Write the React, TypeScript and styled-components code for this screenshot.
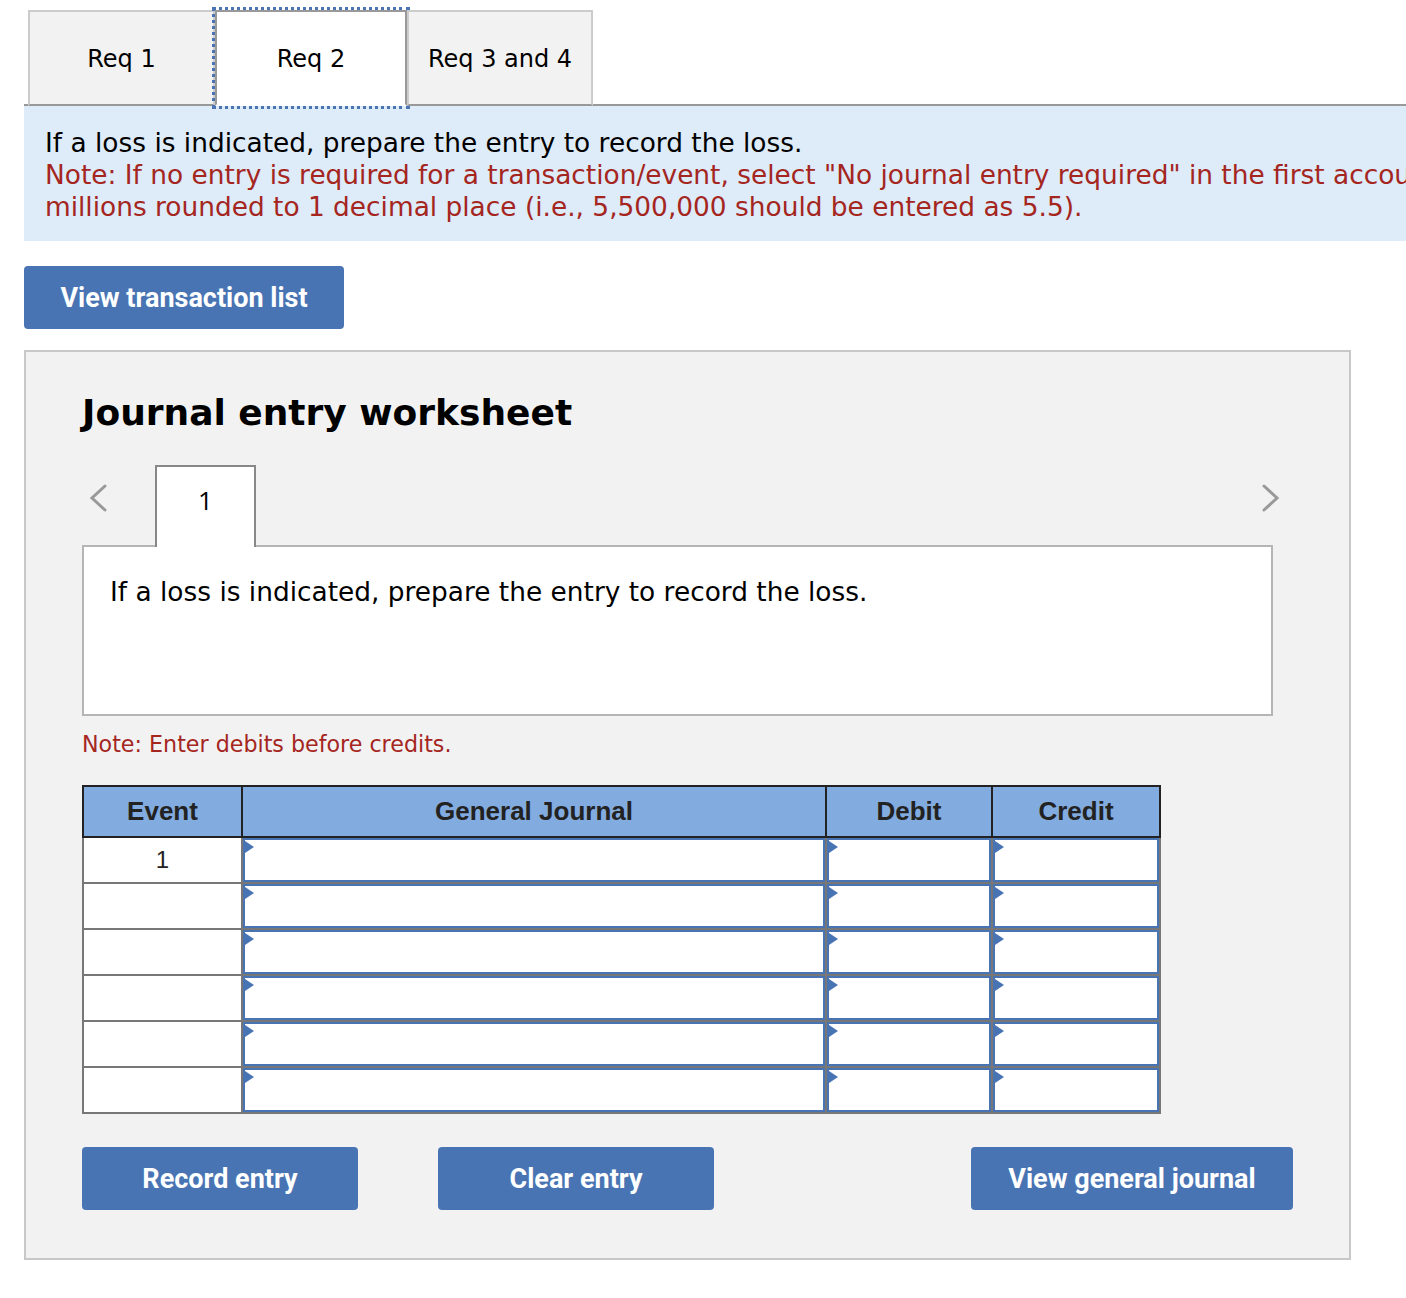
import React from 'react';
import styled, { createGlobalStyle } from 'styled-components';

const GlobalStyle = createGlobalStyle`
  html, body {
    margin: 0;
    padding: 0;
    background: #ffffff;
    overflow-x: hidden;
  }
  body {
    font-family: 'DejaVu Sans', Verdana, sans-serif;
    color: #000;
  }
`;

const Page = styled.div`
  padding: 10px 0 40px 24px;
  width: 1700px;
`;

const TabBar = styled.div`
  display: flex;
  padding-left: 4px;
  border-bottom: 2px solid #999;
`;

const ReqTab = styled.button<{ $active?: boolean; $width: number }>`
  width: ${(p) => p.$width}px;
  height: 96px;
  margin-bottom: -2px;
  font-family: 'DejaVu Sans', Verdana, sans-serif;
  font-size: 24px;
  color: #000;
  background: ${(p) => (p.$active ? '#ffffff' : '#f2f2f2')};
  border: 2px solid ${(p) => (p.$active ? '#999' : '#cccccc')};
  border-bottom: ${(p) => (p.$active ? '2px solid #fff' : '2px solid #999')};
  outline: ${(p) => (p.$active ? '3px dotted #4a74b4' : 'none')};
  outline-offset: 0;
  cursor: pointer;
  padding: 2px 0 0;
`;

const InfoBox = styled.div`
  background: #deebf8;
  padding: 21px 21px 18px;
  font-size: 26.4px;
  line-height: 32px;
`;

const InfoLine = styled.p`
  margin: 0;
  white-space: nowrap;
`;

const RedText = styled.p`
  margin: 0;
  color: #a4261f;
  white-space: nowrap;
`;

const BlueButton = styled.button<{ $width: number }>`
  width: ${(p) => p.$width}px;
  height: 63px;
  background: #4874b4;
  color: #fff;
  border: none;
  border-radius: 4px;
  font-family: Roboto, 'Liberation Sans', sans-serif;
  font-weight: 700;
  font-size: 27px;
  cursor: pointer;
  padding: 0;
`;

const TopButtonRow = styled.div`
  padding: 25px 0 21px;
`;

const Panel = styled.section`
  width: 1327px;
  box-sizing: border-box;
  background: #f2f2f2;
  border: 2px solid #c8c8c8;
  padding: 39px 56px 48px;
`;

const Title = styled.h2`
  margin: 0;
  font-size: 36px;
  line-height: 44px;
  font-weight: 700;
`;

const NavRow = styled.div`
  width: 1191px;
  display: flex;
  align-items: flex-end;
  margin-top: 30px;
`;

const ArrowButton = styled.button<{ $side: 'left' | 'right' }>`
  background: none;
  border: none;
  padding: 0;
  width: 24px;
  height: 32px;
  align-self: center;
  margin: ${(p) => (p.$side === 'left' ? '0 45px 14px 4px' : '0 -10px 14px auto')};
  cursor: pointer;
  svg {
    display: block;
  }
`;

const EntryTab = styled.div`
  width: 101px;
  height: 82px;
  box-sizing: border-box;
  background: #fff;
  border: 2px solid #888;
  border-bottom: none;
  margin-bottom: -2px;
  position: relative;
  z-index: 1;
  text-align: center;
  padding-top: 16px;
  font-family: 'Open Sans', 'DejaVu Sans', sans-serif;
  font-size: 26px;
  line-height: 34px;
`;

const DescBox = styled.div`
  width: 1191px;
  height: 171px;
  box-sizing: border-box;
  background: #fff;
  border: 2px solid #b5b5b5;
  padding: 29px 26px;
  font-size: 26.4px;
  line-height: 32px;
`;

const NoteText = styled.p`
  margin: 13px 0 26px;
  color: #a4261f;
  font-size: 22.2px;
  line-height: 30px;
`;

const Journal = styled.table`
  border-collapse: collapse;
  table-layout: fixed;
  width: 1077px;
  border: 2px solid #777;
  font-family: 'Liberation Sans', Arial, sans-serif;
`;

const HeadCell = styled.th<{ $width: number }>`
  width: ${(p) => p.$width}px;
  height: 49px;
  background: #82abdf;
  border: 2px solid #222;
  color: #222;
  font-size: 26px;
  font-weight: 700;
  padding: 0;
  text-align: center;
`;

const EventCell = styled.td`
  height: 44px;
  background: #fff;
  border: 2px solid #777;
  text-align: center;
  font-size: 24px;
  color: #222;
  padding: 0;
`;

const InputCell = styled.td`
  height: 44px;
  border: 2px solid #777;
  padding: 0;
  background: #fff;
`;

const InputBox = styled.div`
  height: 44px;
  box-sizing: border-box;
  border: 2px solid #4874b4;
  position: relative;
  &::before {
    content: '';
    position: absolute;
    left: 0;
    top: 1px;
    border-top: 6px solid transparent;
    border-bottom: 6px solid transparent;
    border-left: 9px solid #4874b4;
  }
`;

const ActionRow = styled.div`
  display: flex;
  margin-top: 33px;
`;

const Spacer = styled.div<{ $width?: number }>`
  ${(p) => (p.$width ? `width: ${p.$width}px;` : 'flex: 1;')}
`;

const Chevron: React.FC<{ dir: 'left' | 'right' }> = ({ dir }) => (
  <svg width="24" height="32" viewBox="0 0 24 32" fill="none">
    <path
      d={dir === 'left' ? 'M19 4 L6 16 L19 28' : 'M5 4 L18 16 L5 28'}
      stroke="#999"
      strokeWidth="3"
      strokeLinecap="round"
      strokeLinejoin="miter"
    />
  </svg>
);

const rows = ['1', '', '', '', '', ''];

const App: React.FC = () => {
  return (
    <>
      <GlobalStyle />
      <Page>
        <TabBar>
          <ReqTab $width={187}>Req 1</ReqTab>
          <ReqTab $width={192} $active>
            Req 2
          </ReqTab>
          <ReqTab $width={186}>Req 3 and 4</ReqTab>
        </TabBar>
        <InfoBox>
          <InfoLine>If a loss is indicated, prepare the entry to record the loss.</InfoLine>
          <RedText>
            Note: If no entry is required for a transaction/event, select "No journal entry
            required" in the first account field. Enter your answers in
          </RedText>
          <RedText>millions rounded to 1 decimal place (i.e., 5,500,000 should be entered as 5.5).</RedText>
        </InfoBox>
        <TopButtonRow>
          <BlueButton $width={320}>View transaction list</BlueButton>
        </TopButtonRow>
        <Panel>
          <Title>Journal entry worksheet</Title>
          <NavRow>
            <ArrowButton $side="left" aria-label="Previous">
              <Chevron dir="left" />
            </ArrowButton>
            <EntryTab>1</EntryTab>
            <ArrowButton $side="right" aria-label="Next">
              <Chevron dir="right" />
            </ArrowButton>
          </NavRow>
          <DescBox>If a loss is indicated, prepare the entry to record the loss.</DescBox>
          <NoteText>Note: Enter debits before credits.</NoteText>
          <Journal>
            <thead>
              <tr>
                <HeadCell $width={157}>Event</HeadCell>
                <HeadCell $width={582}>General Journal</HeadCell>
                <HeadCell $width={164}>Debit</HeadCell>
                <HeadCell $width={166}>Credit</HeadCell>
              </tr>
            </thead>
            <tbody>
              {rows.map((event, i) => (
                <tr key={i}>
                  <EventCell>{event}</EventCell>
                  <InputCell>
                    <InputBox />
                  </InputCell>
                  <InputCell>
                    <InputBox />
                  </InputCell>
                  <InputCell>
                    <InputBox />
                  </InputCell>
                </tr>
              ))}
            </tbody>
          </Journal>
          <ActionRow>
            <BlueButton $width={276}>Record entry</BlueButton>
            <Spacer $width={80} />
            <BlueButton $width={276}>Clear entry</BlueButton>
            <Spacer />
            <BlueButton $width={322}>View general journal</BlueButton>
          </ActionRow>
        </Panel>
      </Page>
    </>
  );
};

export default App;
